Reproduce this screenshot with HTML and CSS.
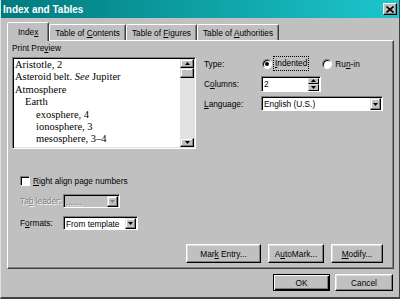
FILE: index.html
```html
<!DOCTYPE html>
<html lang="en">
<head>
    <meta charset="UTF-8">
    <meta name="viewport" content="width=device-width, initial-scale=1.0">
    <title>Index and Tables</title>
    <link rel="stylesheet" href="styles.css">
</head>
<body>
    <div class="window">
        <div class="titlebar">
            <span class="title">Index and Tables</span>
            <span class="close">
                <svg width="8" height="7" viewBox="0 0 8 7"><path d="M0.5 0.5L7.5 6.5M7.5 0.5L0.5 6.5" stroke="#000" stroke-width="1.6"/></svg>
            </span>
        </div>

        <div class="content">
            <div class="tabs">
                <div class="tab active"><span>Inde<u>x</u></span></div>
                <div class="tab"><span>Table of <u>C</u>ontents</span></div>
                <div class="tab"><span>Table of <u>F</u>igures</span></div>
                <div class="tab"><span>Table of <u>A</u>uthorities</span></div>
            </div>

            <div class="panel">
                <div class="panel-top">
                    <div class="left-col">
                        <div class="caption">Print Pre<u>v</u>iew</div>
                        <div class="preview">
                            <div class="preview-text">
                                <div class="entry">Aristotle, 2</div>
                                <div class="entry">Asteroid belt. <i>See</i> Jupiter</div>
                                <div class="entry">Atmosphere</div>
                                <div class="entry lvl2">Earth</div>
                                <div class="entry lvl3">exosphere, 4</div>
                                <div class="entry lvl3">ionosphere, 3</div>
                                <div class="entry lvl3">mesosphere, 3&ndash;4</div>
                                <div class="entry lvl3">stratosphere, 3</div>
                            </div>
                            <div class="scrollbar">
                                <div class="sb-btn">
                                    <svg width="5" height="3" viewBox="0 0 5 3"><path d="M2.5 0L5 3H0z" fill="#000"/></svg>
                                </div>
                                <div class="sb-btn sb-thumb"></div>
                                <div class="sb-track"></div>
                                <div class="sb-btn">
                                    <svg width="5" height="3" viewBox="0 0 5 3"><path d="M0 0h5L2.5 3z" fill="#000"/></svg>
                                </div>
                            </div>
                        </div>

                        <div class="check-row">
                            <span class="checkbox"></span>
                            <span><u>R</u>ight align page numbers</span>
                        </div>

                        <div class="field-row disabled">
                            <span class="field-label">Ta<u>b</u> leader:</span>
                            <div class="select leader">
                                <span class="select-value">.......</span>
                                <span class="drop">
                                    <svg width="5" height="3" viewBox="0 0 5 3"><path d="M0 0h5L2.5 3z" fill="#808080"/></svg>
                                </span>
                            </div>
                        </div>

                        <div class="field-row">
                            <span class="field-label">F<u>o</u>rmats:</span>
                            <div class="select formats">
                                <span class="select-value">From template</span>
                                <span class="drop">
                                    <svg width="5" height="3" viewBox="0 0 5 3"><path d="M0 0h5L2.5 3z" fill="#000"/></svg>
                                </span>
                            </div>
                        </div>
                    </div>

                    <div class="right-col">
                        <div class="opt-row">
                            <span class="opt-label">Type:</span>
                            <span class="radio-opt">
                                <span class="radio checked"></span>
                                <span class="focus"><u>I</u>ndented</span>
                            </span>
                            <span class="radio-opt runin">
                                <span class="radio"></span>
                                <span>Ru<u>n</u>-in</span>
                            </span>
                        </div>
                        <div class="opt-row">
                            <span class="opt-label">C<u>o</u>lumns:</span>
                            <div class="spin">
                                <span class="select-value">2</span>
                                <span class="spin-btns">
                                    <span class="spin-btn">
                                        <svg width="5" height="3" viewBox="0 0 5 3"><path d="M2.5 0L5 3H0z" fill="#000"/></svg>
                                    </span>
                                    <span class="spin-btn">
                                        <svg width="5" height="3" viewBox="0 0 5 3"><path d="M0 0h5L2.5 3z" fill="#000"/></svg>
                                    </span>
                                </span>
                            </div>
                        </div>
                        <div class="opt-row">
                            <span class="opt-label"><u>L</u>anguage:</span>
                            <div class="select language">
                                <span class="select-value">English (U.S.)</span>
                                <span class="drop">
                                    <svg width="5" height="3" viewBox="0 0 5 3"><path d="M0 0h5L2.5 3z" fill="#000"/></svg>
                                </span>
                            </div>
                        </div>
                    </div>
                </div>

                <div class="panel-buttons">
                    <button class="btn mark">Mar<u>k</u> Entry...</button>
                    <button class="btn automark">A<u>u</u>toMark...</button>
                    <button class="btn modify"><u>M</u>odify...</button>
                </div>
            </div>

            <div class="dialog-buttons">
                <button class="btn default ok">OK</button>
                <button class="btn cancel">Cancel</button>
            </div>
        </div>
    </div>
</body>
</html>
```

FILE: styles.css
```css
body {
    margin: 0;
    font-family: "Liberation Sans", Arial, sans-serif;
    font-size: 8.3px;
    color: #000;
    background-color: #c0c0c0;
}

u {
    text-decoration-thickness: 1px;
    text-underline-offset: 1px;
}

.window {
    width: 400px;
    height: 299px;
    box-sizing: border-box;
    background-color: #c0c0c0;
    border-left: 1px solid #dfdfdf;
    border-right: 1px solid #404040;
    border-bottom: 2px solid #404040;
    display: flex;
    flex-direction: column;
}

/* title bar */
.titlebar {
    height: 18px;
    padding: 0 2px;
    display: flex;
    align-items: center;
    justify-content: space-between;
    background: linear-gradient(90deg, #007a7e 0%, #0fa4a8 55%, #1cc6cc 100%);
}

.title {
    color: #fff;
    font-weight: bold;
    font-size: 10px;
}

.close {
    width: 14px;
    height: 12px;
    box-sizing: border-box;
    background-color: #c0c0c0;
    border: 1px solid;
    border-color: #fff #000 #000 #fff;
    box-shadow: inset -1px -1px #808080;
    display: flex;
    align-items: center;
    justify-content: center;
}

.content {
    flex: 1;
    display: flex;
    flex-direction: column;
    padding: 4px 5px 0 6px;
}

/* tabs */
.tabs {
    height: 18px;
    display: flex;
    align-items: flex-end;
    position: relative;
    z-index: 2;
}

.tab {
    height: 16px;
    box-sizing: border-box;
    padding: 0 5px;
    border: 1px solid;
    border-bottom: none;
    border-color: #fff #404040 transparent #fff;
    border-radius: 2px 2px 0 0;
    box-shadow: inset -1px 0 #808080;
    background-color: #c0c0c0;
    display: flex;
    align-items: center;
    white-space: nowrap;
}

.tab.active {
    height: 19px;
    padding: 0 10px 1px;
    margin-bottom: -1px;
}

/* tab page */
.panel {
    height: 229px;
    box-sizing: border-box;
    border: 1px solid;
    border-color: #fff #404040 #404040 #fff;
    box-shadow: inset -1px -1px #808080;
    padding: 2px 10px 5px 4px;
    display: flex;
    flex-direction: column;
}

.panel-top {
    display: flex;
}

.left-col {
    width: 187px;
    display: flex;
    flex-direction: column;
}

.caption {
    height: 10px;
    line-height: 10px;
}

.preview {
    height: 92px;
    margin-top: 4px;
    box-sizing: border-box;
    display: flex;
    border: 1px solid;
    border-color: #808080 #fff #fff #808080;
    box-shadow: inset 1px 1px #000, inset -1px -1px #dfdfdf;
    padding: 1px;
}

.preview-text {
    flex: 1;
    background-color: #fff;
    overflow: hidden;
    padding-left: 1px;
    font-family: "Liberation Serif", "Times New Roman", serif;
    font-size: 10.5px;
    line-height: 12.4px;
}

.entry {
    white-space: nowrap;
}

.entry.lvl2 {
    padding-left: 10px;
}

.entry.lvl3 {
    padding-left: 21px;
}

.scrollbar {
    width: 14px;
    display: flex;
    flex-direction: column;
    background-color: #e2e2e2;
}

.sb-btn {
    height: 9px;
    box-sizing: border-box;
    background-color: #c0c0c0;
    border: 1px solid;
    border-color: #dfdfdf #000 #000 #dfdfdf;
    box-shadow: inset -1px -1px #808080, inset 1px 1px #fff;
    display: flex;
    align-items: center;
    justify-content: center;
}

.sb-thumb {
    height: 10px;
}

.sb-track {
    flex: 1;
}

.check-row {
    height: 11px;
    margin: 26px 0 0 8px;
    display: flex;
    align-items: center;
    gap: 3px;
    white-space: nowrap;
}

.checkbox {
    width: 10px;
    height: 10px;
    box-sizing: border-box;
    background-color: #fff;
    border: 1px solid;
    border-color: #808080 #fff #fff #808080;
    box-shadow: inset 1px 1px #000;
}

.field-row {
    height: 14px;
    margin: 8px 0 0 8px;
    display: flex;
    align-items: center;
}

.field-label {
    width: 43px;
    flex-shrink: 0;
    white-space: nowrap;
}

.disabled {
    color: #808080;
    text-shadow: 1px 1px #fff;
}

/* combo boxes and spinner */
.select,
.spin {
    height: 14px;
    box-sizing: border-box;
    display: flex;
    align-items: center;
    background-color: #fff;
    border: 1px solid;
    border-color: #808080 #fff #fff #808080;
    box-shadow: inset 1px 1px #000;
    padding: 1px 1px 0 2px;
}

.select-value {
    flex: 1;
    white-space: nowrap;
}

.select.leader {
    width: 57px;
    background-color: #c0c0c0;
}

.select.formats {
    width: 75px;
}

.select.language {
    width: 122px;
    height: 15px;
}

.drop {
    width: 11px;
    height: 100%;
    box-sizing: border-box;
    background-color: #c0c0c0;
    border: 1px solid;
    border-color: #dfdfdf #000 #000 #dfdfdf;
    box-shadow: inset -1px -1px #808080, inset 1px 1px #fff;
    display: flex;
    align-items: center;
    justify-content: center;
}

.spin {
    width: 60px;
    height: 16px;
}

.spin-btns {
    width: 11px;
    height: 100%;
    display: flex;
    flex-direction: column;
}

.spin-btn {
    flex: 1;
    box-sizing: border-box;
    background-color: #c0c0c0;
    border: 1px solid;
    border-color: #dfdfdf #000 #000 #dfdfdf;
    display: flex;
    align-items: center;
    justify-content: center;
}

/* right column */
.right-col {
    margin: 13px 0 0 8px;
    display: flex;
    flex-direction: column;
    gap: 5px;
}

.opt-row {
    height: 15px;
    display: flex;
    align-items: center;
    white-space: nowrap;
}

.opt-label {
    width: 57px;
}

.radio-opt {
    display: flex;
    align-items: center;
    gap: 2px;
    margin-left: 1px;
}

.radio-opt.runin {
    margin-left: 14px;
    gap: 3px;
}

.radio {
    width: 10px;
    height: 10px;
    box-sizing: border-box;
    border-radius: 50%;
    background-color: #fff;
    border: 1px solid;
    border-color: #808080 #fff #fff #808080;
    box-shadow: inset 1px 1px #000;
    display: flex;
    align-items: center;
    justify-content: center;
}

.radio.checked::after {
    content: '';
    width: 4px;
    height: 4px;
    border-radius: 50%;
    background-color: #000;
}

.focus {
    outline: 1px dotted #000;
    padding: 1px 1px 2px;
}

/* buttons */
.btn {
    font-family: inherit;
    font-size: 8.3px;
    color: #000;
    background-color: #c0c0c0;
    box-sizing: border-box;
    border: 1px solid;
    border-color: #fff #000 #000 #fff;
    box-shadow: inset -1px -1px #808080, inset 1px 1px #dfdfdf;
    padding: 0;
    margin: 0;
}

.btn.default {
    border-color: #000;
    box-shadow: inset 1px 1px #fff, inset -1px -1px #000, inset -2px -2px #808080;
}

.panel-buttons {
    margin-top: auto;
    height: 19px;
    display: flex;
    justify-content: flex-end;
    gap: 7px;
}

.btn.mark { width: 75px; }
.btn.automark { width: 56px; }
.btn.modify { width: 52px; }

.dialog-buttons {
    margin-top: 5px;
    padding-right: 1px;
    height: 17px;
    display: flex;
    justify-content: flex-end;
    gap: 5px;
}

.btn.ok { width: 57px; }
.btn.cancel { width: 58px; }
```
